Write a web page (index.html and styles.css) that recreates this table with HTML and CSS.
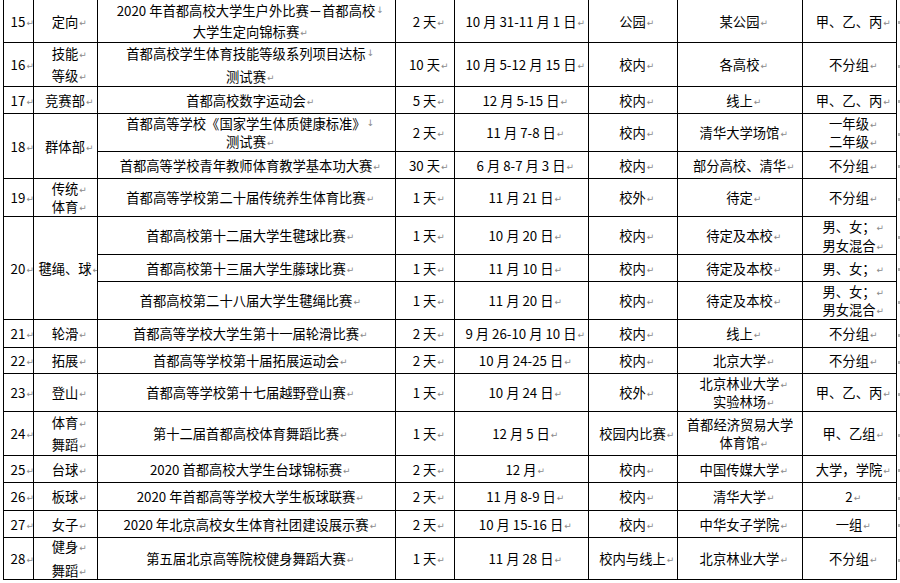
FILE: index.html
```html
<!DOCTYPE html>
<html lang="zh-CN">
<head>
<meta charset="utf-8">
<title>首都高校体育赛事安排</title>
<link rel="stylesheet" href="styles.css">
</head>
<body>
<div class="page">
  <div class="tbl">
    <!-- 15 -->
    <div class="c"><p>15<i>↵</i></p></div>
    <div class="c"><p>定向<i>↵</i></p></div>
    <div class="c l21"><p>2020 年首都高校大学生户外比赛－首都高校<b>↓</b></p><p>大学生定向锦标赛<i>↵</i></p></div>
    <div class="c"><p>2 天<i>↵</i></p></div>
    <div class="c"><p>10 月 31-11 月 1 日<i>↵</i></p></div>
    <div class="c"><p>公园<i>↵</i></p></div>
    <div class="c"><p>某公园<i>↵</i></p></div>
    <div class="c"><p>甲、乙、丙<i>↵</i></p></div>
    <!-- 16 -->
    <div class="c"><p>16<i>↵</i></p></div>
    <div class="c l22"><p>技能<i>↵</i></p><p>等级<i>↵</i></p></div>
    <div class="c l23"><p>首都高校学生体育技能等级系列项目达标<b>↓</b></p><p>测试赛<i>↵</i></p></div>
    <div class="c"><p>10 天<i>↵</i></p></div>
    <div class="c"><p>10 月 5-12 月 15 日<i>↵</i></p></div>
    <div class="c"><p>校内<i>↵</i></p></div>
    <div class="c"><p>各高校<i>↵</i></p></div>
    <div class="c"><p>不分组<i>↵</i></p></div>
    <!-- 17 -->
    <div class="c"><p>17<i>↵</i></p></div>
    <div class="c"><p>竞赛部<i>↵</i></p></div>
    <div class="c"><p>首都高校数字运动会<i>↵</i></p></div>
    <div class="c"><p>5 天<i>↵</i></p></div>
    <div class="c"><p>12 月 5-15 日<i>↵</i></p></div>
    <div class="c"><p>校内<i>↵</i></p></div>
    <div class="c"><p>线上<i>↵</i></p></div>
    <div class="c"><p>甲、乙、丙<i>↵</i></p></div>
    <!-- 18 -->
    <div class="c r2"><p>18<i>↵</i></p></div>
    <div class="c r2"><p>群体部<i>↵</i></p></div>
    <div class="c l18"><p>首都高等学校《国家学生体质健康标准》<b>↓</b></p><p>测试赛<i>↵</i></p></div>
    <div class="c"><p>2 天<i>↵</i></p></div>
    <div class="c"><p>11 月 7-8 日<i>↵</i></p></div>
    <div class="c"><p>校内<i>↵</i></p></div>
    <div class="c"><p>清华大学场馆<i>↵</i></p></div>
    <div class="c l18"><p>一年级<i>↵</i></p><p>二年级<i>↵</i></p></div>
    <div class="c"><p>首都高等学校青年教师体育教学基本功大赛<i>↵</i></p></div>
    <div class="c"><p>30 天<i>↵</i></p></div>
    <div class="c"><p>6 月 8-7 月 3 日<i>↵</i></p></div>
    <div class="c"><p>校内<i>↵</i></p></div>
    <div class="c"><p>部分高校、清华<i>↵</i></p></div>
    <div class="c"><p>不分组<i>↵</i></p></div>
    <!-- 19 -->
    <div class="c"><p>19<i>↵</i></p></div>
    <div class="c l18"><p>传统<i>↵</i></p><p>体育<i>↵</i></p></div>
    <div class="c"><p>首都高等学校第二十届传统养生体育比赛<i>↵</i></p></div>
    <div class="c"><p>1 天<i>↵</i></p></div>
    <div class="c"><p>11 月 21 日<i>↵</i></p></div>
    <div class="c"><p>校外<i>↵</i></p></div>
    <div class="c"><p>待定<i>↵</i></p></div>
    <div class="c"><p>不分组<i>↵</i></p></div>
    <!-- 20 -->
    <div class="c r3"><p>20<i>↵</i></p></div>
    <div class="c r3"><p>毽绳、球<i>↵</i></p></div>
    <div class="c"><p>首都高校第十二届大学生毽球比赛<i>↵</i></p></div>
    <div class="c"><p>1 天<i>↵</i></p></div>
    <div class="c"><p>10 月 20 日<i>↵</i></p></div>
    <div class="c"><p>校内<i>↵</i></p></div>
    <div class="c"><p>待定及本校<i>↵</i></p></div>
    <div class="c l19"><p>男、女；<i>↵</i></p><p>男女混合<i>↵</i></p></div>
    <div class="c"><p>首都高校第十三届大学生藤球比赛<i>↵</i></p></div>
    <div class="c"><p>1 天<i>↵</i></p></div>
    <div class="c"><p>11 月 10 日<i>↵</i></p></div>
    <div class="c"><p>校内<i>↵</i></p></div>
    <div class="c"><p>待定及本校<i>↵</i></p></div>
    <div class="c"><p>男、女；<i>↵</i></p></div>
    <div class="c"><p>首都高校第二十八届大学生毽绳比赛<i>↵</i></p></div>
    <div class="c"><p>1 天<i>↵</i></p></div>
    <div class="c"><p>11 月 20 日<i>↵</i></p></div>
    <div class="c"><p>校内<i>↵</i></p></div>
    <div class="c"><p>待定及本校<i>↵</i></p></div>
    <div class="c l18"><p>男、女；<i>↵</i></p><p>男女混合<i>↵</i></p></div>
    <!-- 21 -->
    <div class="c"><p>21<i>↵</i></p></div>
    <div class="c"><p>轮滑<i>↵</i></p></div>
    <div class="c"><p>首都高等学校大学生第十一届轮滑比赛<i>↵</i></p></div>
    <div class="c"><p>2 天<i>↵</i></p></div>
    <div class="c"><p>9 月 26-10 月 10 日<i>↵</i></p></div>
    <div class="c"><p>校内<i>↵</i></p></div>
    <div class="c"><p>线上<i>↵</i></p></div>
    <div class="c"><p>不分组<i>↵</i></p></div>
    <!-- 22 -->
    <div class="c"><p>22<i>↵</i></p></div>
    <div class="c"><p>拓展<i>↵</i></p></div>
    <div class="c"><p>首都高等学校第十届拓展运动会<i>↵</i></p></div>
    <div class="c"><p>2 天<i>↵</i></p></div>
    <div class="c"><p>10 月 24-25 日<i>↵</i></p></div>
    <div class="c"><p>校内<i>↵</i></p></div>
    <div class="c"><p>北京大学<i>↵</i></p></div>
    <div class="c"><p>不分组<i>↵</i></p></div>
    <!-- 23 -->
    <div class="c"><p>23<i>↵</i></p></div>
    <div class="c"><p>登山<i>↵</i></p></div>
    <div class="c"><p>首都高等学校第十七届越野登山赛<i>↵</i></p></div>
    <div class="c"><p>1 天<i>↵</i></p></div>
    <div class="c"><p>10 月 24 日<i>↵</i></p></div>
    <div class="c"><p>校外<i>↵</i></p></div>
    <div class="c l18"><p>北京林业大学<i>↵</i></p><p>实验林场<i>↵</i></p></div>
    <div class="c"><p>甲、乙、丙<i>↵</i></p></div>
    <!-- 24 -->
    <div class="c"><p>24<i>↵</i></p></div>
    <div class="c l22"><p>体育<i>↵</i></p><p>舞蹈<i>↵</i></p></div>
    <div class="c"><p>第十二届首都高校体育舞蹈比赛<i>↵</i></p></div>
    <div class="c"><p>1 天<i>↵</i></p></div>
    <div class="c"><p>12 月 5 日<i>↵</i></p></div>
    <div class="c"><p>校园内比赛<i>↵</i></p></div>
    <div class="c l18"><p>首都经济贸易大学</p><p>体育馆<i>↵</i></p></div>
    <div class="c"><p>甲、乙组<i>↵</i></p></div>
    <!-- 25 -->
    <div class="c"><p>25<i>↵</i></p></div>
    <div class="c"><p>台球<i>↵</i></p></div>
    <div class="c"><p>2020 首都高校大学生台球锦标赛<i>↵</i></p></div>
    <div class="c"><p>2 天<i>↵</i></p></div>
    <div class="c"><p>12 月<i>↵</i></p></div>
    <div class="c"><p>校内<i>↵</i></p></div>
    <div class="c"><p>中国传媒大学<i>↵</i></p></div>
    <div class="c"><p>大学，学院<i>↵</i></p></div>
    <!-- 26 -->
    <div class="c"><p>26<i>↵</i></p></div>
    <div class="c"><p>板球<i>↵</i></p></div>
    <div class="c"><p>2020 年首都高等学校大学生板球联赛<i>↵</i></p></div>
    <div class="c"><p>2 天<i>↵</i></p></div>
    <div class="c"><p>11 月 8-9 日<i>↵</i></p></div>
    <div class="c"><p>校内<i>↵</i></p></div>
    <div class="c"><p>清华大学<i>↵</i></p></div>
    <div class="c"><p>2<i>↵</i></p></div>
    <!-- 27 -->
    <div class="c"><p>27<i>↵</i></p></div>
    <div class="c"><p>女子<i>↵</i></p></div>
    <div class="c"><p>2020 年北京高校女生体育社团建设展示赛<i>↵</i></p></div>
    <div class="c"><p>2 天<i>↵</i></p></div>
    <div class="c"><p>10 月 15-16 日<i>↵</i></p></div>
    <div class="c"><p>校内<i>↵</i></p></div>
    <div class="c"><p>中华女子学院<i>↵</i></p></div>
    <div class="c"><p>一组<i>↵</i></p></div>
    <!-- 28 -->
    <div class="c"><p>28<i>↵</i></p></div>
    <div class="c l24"><p>健身<i>↵</i></p><p>舞蹈<i>↵</i></p></div>
    <div class="c"><p>第五届北京高等院校健身舞蹈大赛<i>↵</i></p></div>
    <div class="c"><p>1 天<i>↵</i></p></div>
    <div class="c"><p>11 月 28 日<i>↵</i></p></div>
    <div class="c"><p>校内与线上<i>↵</i></p></div>
    <div class="c"><p>北京林业大学<i>↵</i></p></div>
    <div class="c"><p>不分组<i>↵</i></p></div>
  </div>
  <div class="marks">
    <span class="m"></span><span class="m"></span><span class="m"></span><span class="m"></span>
    <span class="m"></span><span class="m"></span><span class="m"></span><span class="m"></span>
    <span class="m"></span><span class="m"></span><span class="m"></span><span class="m"></span>
    <span class="m"></span><span class="m"></span><span class="m"></span><span class="m"></span>
    <span class="m"></span>
  </div>
</div>
</body>
</html>
```
FILE: styles.css
```css
:root {
  --rows: 42px 43px 26px 37px 26px 37px 37px 26px 37px 27px 25px 37px 43px 26px 27px 26px 41px;
}

body {
  margin: 0;
  background: #fff;
  color: #000;
  font-family: "Noto Sans CJK SC", "Noto Sans", sans-serif;
  font-size: 13.3px;
}

.page {
  display: flex;
  align-items: flex-start;
  padding-left: 3px;
}

.tbl {
  display: grid;
  grid-template-columns: 29px 63px 297px 58px 133px 88px 124px 93px;
  grid-template-rows: var(--rows);
  gap: 1px;
  background: #000;
  border: 1px solid #000;
  border-top: 0;
}

.c {
  background: #fff;
  display: flex;
  flex-direction: column;
  justify-content: center;
  overflow: hidden;
  white-space: nowrap;
  text-align: center;
  line-height: 19px;
}

.c p {
  margin: 0;
}

.c i,
.c b {
  display: inline-block;
  width: 0;
  font-style: normal;
  font-weight: normal;
  font-family: "DejaVu Sans", sans-serif;
  font-size: 9px;
  line-height: 1;
  color: #8a8a8a;
}

.c i {
  vertical-align: 1px;
  padding-left: 1px;
}

.c b {
  vertical-align: 3px;
  padding-left: 1px;
}

.r2 { grid-row: span 2; }
.r3 { grid-row: span 3; }

.l18 { line-height: 18px; }
.l19 { line-height: 19px; }
.l21 { line-height: 21px; }
.l22 { line-height: 22px; }
.l23 { line-height: 23px; }
.l24 { line-height: 23.5px; }

.marks {
  display: grid;
  grid-template-rows: var(--rows);
  row-gap: 1px;
  width: 4px;
  margin-left: 1px;
}

.m {
  display: flex;
  align-items: center;
  padding-top: 3px;
}

.m::before {
  content: "";
  width: 2px;
  height: 3px;
  background: #b0b0b0;
}
```
